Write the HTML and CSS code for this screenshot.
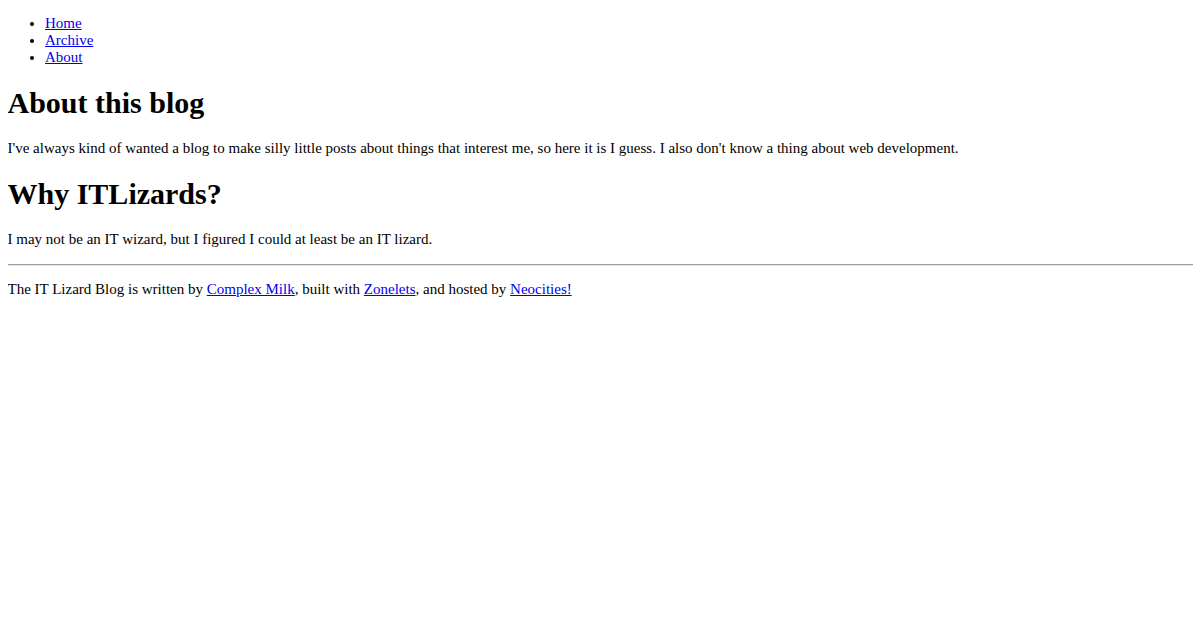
FILE: index.html
```html
<!DOCTYPE html>
<html lang="en">
<head>
<meta charset="utf-8">
<title>About - The IT Lizard Blog</title>
<link rel="stylesheet" href="styles.css">
</head>
<body class="page">
<nav class="site-nav">
<ul class="nav-list">
<li class="nav-item"><a class="link" href="#">Home</a></li>
<li class="nav-item"><a class="link" href="#">Archive</a></li>
<li class="nav-item"><a class="link" href="#">About</a></li>
</ul>
</nav>
<main class="content">
<h1 class="heading">About this blog</h1>
<p class="text">I've always kind of wanted a blog to make silly little posts about things that interest me, so here it is I guess. I also don't know a thing about web development.</p>
<h1 class="heading">Why ITLizards?</h1>
<p class="text">I may not be an IT wizard, but I figured I could at least be an IT lizard.</p>
</main>
<footer class="site-footer">
<hr class="rule">
<p class="text">The IT Lizard Blog is written by <a class="link" href="#">Complex Milk</a>, built with <a class="link" href="#">Zonelets</a>, and hosted by <a class="link" href="#">Neocities!</a></p>
</footer>
</body>
</html>
```
FILE: styles.css
```css
html { background: #fff; }
.page {
  margin: 0 7.5px 7.5px;
  font-family: "Liberation Serif", "Times New Roman", serif;
  font-size: 15px;
  color: #000;
}
.nav-list { margin: 15px 0; padding-left: 37.5px; list-style: disc; }
.link { color: #0000ee; text-decoration: underline; }
.heading { font-size: 30px; font-weight: bold; margin: 20.1px 0; }
.text { margin: 15.5px 0; }
.rule { margin: 9px 0 7.5px; border: 0; border-top: 1px solid #a0a0a0; border-bottom: 1px solid #e4e4e4; height: 0; }
```
